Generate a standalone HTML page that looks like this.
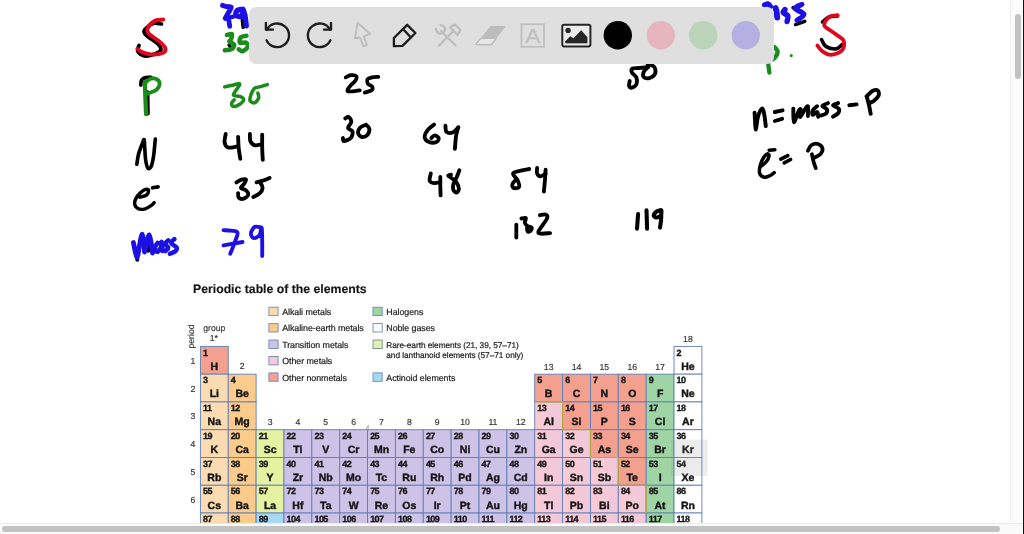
<!DOCTYPE html>
<html><head><meta charset="utf-8"><title>whiteboard</title>
<style>
html,body{margin:0;padding:0;background:#fff;overflow:hidden}
body{width:1024px;height:534px;position:relative;overflow:hidden;font-family:"Liberation Sans",sans-serif;}
#pt{position:absolute;left:0;top:0;width:1024px;height:523.2px;overflow:hidden;filter:blur(0.6px);will-change:transform;opacity:0.999}
.ak{fill:#fbdcb2} .ae{fill:#fbcb8c} .tm{fill:#cec2e7} .om{fill:url(#omg)}
.nm{fill:#f3a08e} .ha{fill:#9fd5a5} .ng{fill:#fff} .re{fill:#e5f2a2} .ac{fill:#a6daf3}
#cells rect{stroke:#5f7fb8;stroke-width:0.9}
#cells text{text-rendering:geometricPrecision;font-family:"Liberation Sans",sans-serif;}
#cells .n,#cells .s,#cells .ti{font-weight:bold;fill:#151515;stroke:#151515}
#cells .n{font-size:9.0px;letter-spacing:-0.55px;stroke-width:0.35px}
#cells .s{font-size:10.5px;text-anchor:middle;stroke-width:0.4px}
#cells .g{font-size:8.7px;fill:#333;stroke:#333;stroke-width:0.15px;text-anchor:middle}
#cells .lt{font-size:8.85px;fill:#222;stroke:#222;stroke-width:0.2px;letter-spacing:-0.05px}
#cells .sm{font-size:8.3px}
#cells .sw{stroke:#6f86bd;stroke-width:0.9}
#cells .ti{font-size:12.25px;stroke-width:0.15px}
#tb{position:absolute;left:248.8px;top:7px;width:524.8px;height:56.5px;border-radius:7px;background:#dfdfdf;}
#hs{position:absolute;left:0;top:523.2px;width:1024px;height:10.8px;background:#fafafa;border-top:1px solid #ececec;box-sizing:border-box}
#hs div{position:absolute;left:2px;top:2px;width:998px;height:6.1px;border-radius:3px;background:#c2c2c2}
#vs{position:absolute;left:1010px;top:0;width:14px;height:523px;background:#fcfcfc;border-left:1px solid #efefef;box-sizing:border-box}
#vs div{position:absolute;left:3.6px;top:14px;width:6px;height:65px;border-radius:3px;background:#c2c2c2}
#edge{position:absolute;left:1022.6px;top:0;width:1.4px;height:534px;background:#111}
svg{position:absolute;left:0;top:0}
#icons{opacity:0.999;will-change:transform;filter:blur(0.35px)}
#ink{filter:blur(0.3px)}
</style></head><body>
<svg id="ink" width="1024" height="534" viewBox="0 0 1024 534" fill="none" stroke-linecap="round" stroke-linejoin="round">
<path d="M161.5 24.0C160.1 23.9 156.0 22.4 153.1 23.5C150.2 24.6 145.0 28.7 144.1 30.8C143.2 33.0 145.2 34.2 147.5 36.4C149.8 38.5 155.3 41.6 157.6 43.7C159.8 45.9 161.2 47.7 161.0 49.3C160.8 50.9 159.1 52.2 156.5 53.3C153.9 54.4 148.3 56.4 145.2 56.1C142.1 55.8 138.9 53.4 137.9 51.6C136.9 49.8 138.8 46.4 139.0 45.4" stroke="#000" stroke-width="3.73"/>
<path d="M163.2 19.6C161.7 19.9 156.8 19.7 154.2 21.2C151.6 22.7 148.3 26.3 147.5 28.5C146.7 30.7 147.3 32.1 149.2 34.2C151.1 36.3 156.0 38.6 158.7 40.9C161.4 43.2 164.8 46.1 165.4 48.2C166.0 50.3 164.5 52.3 162.1 53.3C159.7 54.3 154.2 54.6 150.8 54.4C147.4 54.2 144.1 53.0 141.9 52.1C139.7 51.2 138.2 49.3 137.4 48.8" stroke="#e1061c" stroke-width="3.95"/>
<path d="M140.8 85.0C140.9 84.2 140.8 81.2 141.6 80.0C142.4 78.8 143.9 78.0 145.5 77.6C147.1 77.2 150.1 77.4 151.0 77.4" stroke="#000" stroke-width="3.73"/>
<path d="M147.6 92.0L147.9 113.6" stroke="#000" stroke-width="3.73"/>
<path d="M144.9 82.0C145.0 84.2 145.1 89.6 145.3 95.0C145.5 100.4 146.0 111.0 146.1 114.2" stroke="#1b8c1b" stroke-width="4.29"/>
<path d="M145.0 83.0C146.0 82.3 148.8 79.2 150.8 78.6C152.8 78.0 155.7 78.6 157.2 79.5C158.7 80.4 159.7 82.3 159.6 84.0C159.5 85.7 158.5 88.1 156.5 89.7C154.5 91.3 149.2 92.9 147.8 93.6" stroke="#1b8c1b" stroke-width="3.84"/>
<path d="M242.4 20.0L243.2 27.3" stroke="#000" stroke-width="3.62"/>
<path d="M228.5 20.0L229.3 25.3" stroke="#000" stroke-width="3.62"/>
<path d="M222.6 5.4C223.3 5.6 225.6 6.3 227.0 6.6C228.4 6.9 230.9 6.2 231.2 7.2C231.4 8.2 229.5 10.7 228.5 12.5C227.5 14.3 225.9 17.2 225.4 18.2" stroke="#1d10e4" stroke-width="4.97"/>
<path d="M225.4 18.4L233.5 16.6" stroke="#1d10e4" stroke-width="4.52"/>
<path d="M228.6 19.0L229.8 26.4" stroke="#1d10e4" stroke-width="4.75"/>
<path d="M241.5 9.4C240.8 9.6 237.9 9.7 237.0 10.6C236.1 11.5 235.4 14.0 236.0 15.0C236.6 16.0 239.1 16.9 240.3 16.5C241.5 16.1 242.9 13.6 243.3 12.4C243.8 11.2 242.8 9.0 243.0 9.4C243.2 9.8 244.4 13.2 244.8 15.0C245.2 16.8 245.4 18.4 245.6 20.2C245.8 22.0 246.1 24.9 246.2 25.8" stroke="#1d10e4" stroke-width="5.42"/>
<path d="M229.0 45.0L231.0 47.5" stroke="#000" stroke-width="3.39"/>
<path d="M226.9 34.9C227.7 34.8 231.2 33.4 231.9 34.1C232.6 34.9 231.4 38.1 231.0 39.4C230.6 40.6 229.0 40.7 229.5 41.6C230.0 42.5 233.9 43.5 234.2 44.8C234.5 46.1 232.9 48.4 231.3 49.3C229.7 50.2 225.9 50.1 224.8 50.2" stroke="#1b8c1b" stroke-width="4.52"/>
<path d="M246.5 35.8C245.6 36.0 242.0 36.1 240.9 37.2C239.8 38.3 239.0 41.7 239.8 42.6C240.7 43.5 244.7 41.9 246.0 42.6C247.3 43.4 248.2 45.7 247.6 47.1C247.0 48.5 244.1 50.8 242.6 51.2C241.1 51.6 239.3 49.6 238.7 49.3" stroke="#1b8c1b" stroke-width="4.52"/>
<path d="M224.6 86.9C225.9 86.6 230.0 85.7 232.5 85.2C235.0 84.7 239.3 83.0 239.8 84.0C240.3 85.0 236.3 89.4 235.3 91.3C234.3 93.2 232.8 94.4 233.6 95.3C234.3 96.2 238.1 95.7 239.8 96.4C241.5 97.1 243.7 98.3 243.7 99.6C243.7 100.9 241.6 103.1 239.8 104.3C238.0 105.5 234.3 106.7 233.0 106.5C231.7 106.3 231.5 104.2 231.7 103.1C231.9 102.0 233.8 100.3 234.2 99.8" stroke="#1b8c1b" stroke-width="3.50"/>
<path d="M267.3 84.6C266.0 85.0 261.6 86.2 259.4 86.9C257.2 87.6 255.6 87.2 254.2 88.5C252.8 89.8 251.7 92.7 251.0 94.7C250.3 96.7 249.4 99.2 250.0 100.6C250.6 101.9 253.2 103.2 254.6 102.8C256.0 102.4 258.1 99.6 258.6 98.0C259.2 96.4 258.0 93.8 257.9 93.0" stroke="#1b8c1b" stroke-width="3.50"/>
<path d="M136.8 164.3C137.1 162.6 137.7 157.5 138.5 154.2C139.3 150.9 141.0 147.1 141.9 144.7C142.8 142.3 143.6 139.1 144.1 139.6C144.6 140.1 144.4 143.9 144.7 147.5C145.0 151.1 145.2 157.5 145.8 161.0C146.4 164.5 147.1 167.5 148.0 168.3C148.9 169.1 150.5 168.2 151.4 166.0C152.3 163.8 153.0 159.8 153.7 155.3C154.3 150.8 155.0 141.7 155.3 139.0" stroke="#000" stroke-width="3.62"/>
<path d="M225.7 134.0C225.5 135.4 224.2 140.2 224.6 142.5C225.0 144.8 225.9 146.8 228.0 147.5C230.1 148.2 235.5 146.6 237.0 146.4" stroke="#000" stroke-width="3.84"/>
<path d="M238.1 136.9C238.2 138.8 238.3 144.4 238.7 148.1C239.1 151.8 240.0 157.0 240.3 158.8" stroke="#000" stroke-width="3.84"/>
<path d="M249.9 134.0C250.0 135.2 249.6 139.4 250.4 141.3C251.2 143.2 253.0 144.8 254.9 145.3C256.8 145.8 260.6 144.4 261.7 144.2" stroke="#000" stroke-width="3.84"/>
<path d="M262.2 134.6C262.2 136.8 262.1 143.9 262.2 148.1C262.3 152.3 262.7 157.9 262.8 159.9" stroke="#000" stroke-width="3.84"/>
<path d="M139.8 197.2C140.9 196.8 145.1 196.1 146.6 195.0C148.1 193.9 148.6 191.6 148.6 190.6C148.6 189.6 147.5 189.2 146.6 189.2C145.7 189.2 144.5 189.5 143.0 190.6C141.5 191.7 138.8 193.8 137.4 196.0C136.0 198.2 134.4 201.6 134.6 203.7C134.8 205.8 136.7 208.0 138.5 208.8C140.3 209.7 143.0 209.4 145.2 208.8C147.3 208.2 149.9 206.4 151.4 205.4C152.9 204.4 153.7 203.1 154.2 202.6" stroke="#000" stroke-width="3.45"/>
<path d="M152.5 187.8L158.1 186.9" stroke="#000" stroke-width="3.62"/>
<path d="M236.4 182.4C237.2 181.9 239.9 180.1 241.5 179.6C243.1 179.1 245.5 178.9 246.0 179.6C246.5 180.2 245.2 182.1 244.3 183.5C243.5 184.9 240.6 186.9 240.9 188.0C241.2 189.1 244.8 189.2 246.0 190.3C247.2 191.4 248.6 193.4 248.2 194.8C247.8 196.2 245.3 198.2 243.7 198.7C242.1 199.2 239.6 198.5 238.7 197.6C237.8 196.7 238.2 193.8 238.1 193.1" stroke="#000" stroke-width="3.84"/>
<path d="M269.6 177.9C268.5 178.4 265.0 179.9 262.8 180.7C260.6 181.4 257.6 182.1 256.6 182.4" stroke="#000" stroke-width="3.84"/>
<path d="M260.2 182.6C260.6 183.5 262.7 186.0 262.6 187.8C262.5 189.6 261.2 191.9 259.6 193.4C258.1 194.9 254.4 196.4 253.3 197.0" stroke="#000" stroke-width="3.84"/>
<path d="M136.5 250.0L137.3 259.8" stroke="#000" stroke-width="3.95"/>
<path d="M148.0 243.0L148.2 251.0" stroke="#000" stroke-width="3.62"/>
<path d="M133.4 242.5C134.0 244.9 135.8 256.7 136.8 257.2C137.8 257.7 138.8 249.1 139.6 245.3C140.4 241.5 141.2 234.5 141.9 234.3C142.7 234.1 143.6 241.2 144.1 244.2C144.6 247.1 144.2 252.2 144.7 252.0C145.2 251.8 146.2 245.8 146.9 243.0C147.7 240.2 148.4 234.7 149.2 234.9C149.9 235.1 150.8 241.2 151.4 244.2C152.0 247.2 152.3 251.5 152.5 253.0" stroke="#1d10e4" stroke-width="4.86"/>
<path d="M157.6 243.0C157.1 243.8 154.9 246.1 154.8 247.6C154.7 249.1 156.0 252.0 157.0 252.0C158.0 252.0 160.2 249.3 161.0 247.6C161.8 245.9 161.2 241.4 161.5 242.0C161.8 242.6 162.4 249.5 162.6 251.0" stroke="#1d10e4" stroke-width="4.63"/>
<path d="M168.3 240.3C167.7 240.9 164.9 242.5 164.9 243.7C164.9 244.9 168.2 246.4 168.3 247.6C168.4 248.8 165.9 250.4 165.4 251.0" stroke="#1d10e4" stroke-width="4.52"/>
<path d="M174.4 239.2C173.8 239.8 170.7 241.6 171.1 243.0C171.5 244.4 176.0 246.2 176.7 247.6C177.3 249.0 176.1 250.5 175.0 251.5C173.9 252.5 170.8 253.4 169.9 253.8" stroke="#1d10e4" stroke-width="4.52"/>
<path d="M223.5 230.2C224.7 230.3 228.5 230.3 230.8 230.7C233.1 231.1 236.8 230.7 237.5 232.4C238.2 234.1 236.5 237.2 235.3 240.8C234.1 244.4 231.0 251.6 230.2 253.8" stroke="#1d10e4" stroke-width="3.84"/>
<path d="M223.5 245.3L242.6 242.0" stroke="#1d10e4" stroke-width="3.84"/>
<path d="M261.1 227.4C260.1 227.3 256.6 225.9 254.9 226.8C253.2 227.7 251.3 231.1 251.0 233.0C250.7 234.9 251.9 237.6 253.3 238.0C254.7 238.4 258.0 236.9 259.4 235.2C260.8 233.5 261.2 226.6 261.7 227.9C262.2 229.2 262.1 238.4 262.2 243.1C262.3 247.8 262.2 253.8 262.2 256.0" stroke="#1d10e4" stroke-width="3.84"/>
<path d="M345.7 77.4C346.6 77.0 349.0 75.4 350.8 75.2C352.6 75.0 355.6 75.4 356.4 76.3C357.1 77.2 356.2 79.3 355.3 80.8C354.4 82.3 352.1 83.7 350.8 85.3C349.5 86.9 347.6 89.3 347.4 90.3C347.2 91.3 347.6 91.5 349.7 91.5C351.8 91.5 358.1 90.5 359.8 90.3" stroke="#000" stroke-width="3.73"/>
<path d="M378.3 76.9C377.3 77.0 373.9 77.0 372.1 77.4C370.3 77.8 368.3 78.0 367.6 79.1C366.9 80.2 367.2 82.8 368.0 84.0C368.8 85.2 371.5 85.4 372.1 86.4C372.7 87.5 372.8 89.3 371.6 90.3C370.4 91.3 365.9 92.2 364.8 92.6" stroke="#000" stroke-width="3.73"/>
<path d="M345.2 118.5C345.8 118.2 347.5 116.2 348.5 116.8C349.5 117.4 351.4 120.0 351.3 121.9C351.2 123.8 347.8 126.4 348.0 128.0C348.2 129.6 352.0 129.7 352.5 131.4C353.0 133.1 352.2 136.5 350.8 138.1C349.4 139.7 345.3 141.0 344.0 141.0C342.7 141.0 343.1 138.6 342.9 138.1" stroke="#000" stroke-width="3.84"/>
<path d="M366.0 124.7C365.1 125.2 361.6 126.1 360.3 127.5C359.0 128.9 357.8 131.5 358.1 133.1C358.4 134.7 360.4 136.7 362.0 137.0C363.6 137.3 366.4 136.2 367.6 134.8C368.8 133.4 369.6 130.3 369.3 128.6C369.0 126.9 366.6 125.3 366.0 124.7" stroke="#000" stroke-width="3.84"/>
<path d="M434.2 124.6C433.2 125.4 429.6 127.6 428.0 129.7C426.4 131.8 424.4 134.9 424.6 137.0C424.8 139.1 427.1 141.2 429.1 142.0C431.1 142.8 434.8 142.7 436.4 142.0C438.0 141.3 439.0 139.2 438.7 138.1C438.4 137.0 435.9 135.3 434.7 135.3C433.5 135.3 431.9 137.6 431.3 138.1" stroke="#000" stroke-width="3.84"/>
<path d="M445.4 125.7C445.6 126.7 445.3 130.8 446.5 131.9C447.7 133.0 450.7 133.2 452.7 132.5C454.7 131.8 457.4 128.2 458.3 127.4" stroke="#000" stroke-width="3.84"/>
<path d="M458.3 127.4C457.9 128.8 456.7 132.2 456.1 135.8C455.5 139.4 455.1 146.6 454.9 148.8" stroke="#000" stroke-width="3.84"/>
<path d="M430.8 173.5C430.6 174.7 429.1 179.2 429.7 180.8C430.3 182.4 432.4 182.9 434.2 183.1C436.0 183.3 439.3 182.2 440.3 182.0" stroke="#000" stroke-width="3.84"/>
<path d="M440.3 176.9C440.3 178.5 440.2 183.4 440.3 186.5C440.4 189.6 440.6 193.9 440.6 195.4" stroke="#000" stroke-width="3.84"/>
<path d="M459.4 170.2C458.9 171.4 457.6 175.2 456.6 177.5C455.6 179.8 453.9 182.1 453.3 184.2C452.8 186.2 452.8 188.4 453.3 189.8C453.9 191.2 455.7 192.8 456.6 192.6C457.5 192.4 458.9 190.4 458.9 188.7C458.9 187.0 457.8 184.3 456.6 182.5C455.4 180.7 453.0 179.1 451.6 178.0C450.2 176.9 448.3 176.4 448.2 175.8C448.1 175.2 450.5 174.9 451.0 174.7" stroke="#000" stroke-width="3.84"/>
<path d="M529.3 169.0C527.9 169.3 523.5 169.9 520.8 170.7C518.1 171.4 513.5 171.9 513.0 173.5C512.5 175.1 516.5 177.8 517.5 180.0C518.5 182.2 519.7 185.7 519.0 187.0C518.3 188.3 514.6 188.5 513.5 188.0C512.4 187.5 512.0 185.5 512.5 184.0C513.0 182.5 515.7 180.0 516.3 179.2" stroke="#000" stroke-width="3.84"/>
<path d="M537.1 167.9C537.1 168.8 536.5 172.1 537.1 173.5C537.7 174.9 539.1 176.3 540.5 176.3C541.9 176.3 544.8 174.0 545.6 173.5" stroke="#000" stroke-width="3.84"/>
<path d="M545.6 169.6C545.5 171.3 545.3 176.0 545.0 179.7C544.7 183.3 544.1 189.5 543.9 191.5" stroke="#000" stroke-width="3.84"/>
<path d="M516.3 224.7L516.3 237.6" stroke="#000" stroke-width="3.84"/>
<path d="M521.4 218.5C522.1 218.4 525.3 217.3 525.9 218.0C526.5 218.7 524.6 221.2 524.8 222.5C525.0 223.8 525.9 225.0 527.0 225.8C528.1 226.6 530.9 226.7 531.5 227.5C532.1 228.3 531.0 230.2 530.4 230.9C529.8 231.6 528.2 232.0 527.6 231.5C527.0 231.0 527.1 228.6 527.0 228.0" stroke="#000" stroke-width="3.84"/>
<path d="M539.9 215.2C540.9 215.1 544.4 214.1 545.6 214.6C546.8 215.1 547.8 216.1 547.2 218.0C546.6 219.9 543.7 223.5 542.2 225.8C540.7 228.1 538.5 230.7 538.3 232.0C538.1 233.3 539.1 233.5 541.1 233.7C543.1 233.9 548.6 233.2 550.1 233.1" stroke="#000" stroke-width="3.84"/>
<path d="M648.2 66.9C646.7 67.1 641.8 67.7 639.2 68.0C636.6 68.3 633.7 67.8 632.5 68.5C631.3 69.2 631.2 71.0 631.9 72.5C632.5 74.0 635.6 75.5 636.4 77.5C637.1 79.5 637.1 82.6 636.4 84.3C635.6 86.0 633.1 87.3 631.9 87.6C630.7 87.9 629.5 87.1 629.1 86.0C628.7 84.9 629.6 81.8 629.7 80.9" stroke="#000" stroke-width="3.84"/>
<path d="M648.2 66.9C647.5 67.7 644.5 70.2 643.7 71.9C643.0 73.6 642.8 76.0 643.7 77.0C644.6 78.0 647.4 78.6 649.3 78.1C651.2 77.6 654.0 75.9 654.9 74.2C655.8 72.5 655.4 69.5 654.9 68.0C654.4 66.5 652.8 65.8 651.6 65.2C650.4 64.6 648.3 64.7 647.6 64.6" stroke="#000" stroke-width="3.84"/>
<path d="M638.1 214.1L637.0 228.7" stroke="#000" stroke-width="4.07"/>
<path d="M646.5 210.2L647.1 228.7" stroke="#000" stroke-width="4.07"/>
<path d="M660.6 210.2C659.9 210.5 657.2 211.0 656.1 211.9C655.0 212.8 653.6 214.9 653.8 215.8C654.0 216.7 656.0 217.7 657.2 217.5C658.4 217.3 660.4 215.9 661.1 214.7C661.8 213.5 661.3 209.6 661.3 210.4C661.3 211.2 661.3 216.8 661.1 219.7C660.9 222.6 660.2 226.3 660.0 227.6" stroke="#000" stroke-width="4.07"/>
<path d="M793.0 7.6L800.5 10.8" stroke="#000" stroke-width="3.39"/>
<path d="M795.5 24.6L804.8 21.3" stroke="#000" stroke-width="3.39"/>
<path d="M764.5 5.0C765.1 4.8 767.0 3.5 768.0 3.8C769.0 4.0 770.1 6.0 770.5 6.5" stroke="#1d10e4" stroke-width="5.20"/>
<path d="M775.6 8.0C775.8 8.7 776.3 10.4 776.6 12.0C776.9 13.6 777.1 16.6 777.2 17.5" stroke="#1d10e4" stroke-width="5.88"/>
<path d="M785.0 9.5C784.7 10.0 782.7 11.5 783.2 12.6C783.7 13.7 787.2 14.5 787.9 16.0C788.5 17.5 787.2 20.6 787.1 21.5" stroke="#1d10e4" stroke-width="5.42"/>
<path d="M801.8 4.4C800.7 5.1 794.6 6.8 795.0 8.4C795.4 10.1 803.5 12.3 803.9 14.3C804.3 16.3 798.3 19.2 797.2 20.2" stroke="#1d10e4" stroke-width="5.20"/>
<path d="M837.6 16.0C836.2 16.2 831.5 16.0 829.0 17.0C826.5 18.0 823.6 21.1 822.5 21.9" stroke="#000" stroke-width="3.62"/>
<path d="M821.6 39.6C822.3 40.7 823.4 44.9 825.8 46.4C828.2 47.9 833.3 49.2 836.0 48.9C838.7 48.6 840.9 45.4 841.9 44.7" stroke="#000" stroke-width="3.62"/>
<path d="M837.6 15.2C836.2 15.5 831.4 15.2 829.2 16.9C827.0 18.6 823.6 22.8 824.2 25.3C824.8 27.8 829.4 29.5 832.6 32.0C835.8 34.5 842.0 37.4 843.5 40.5C845.0 43.6 844.0 48.2 841.9 50.6C839.8 53.0 834.1 54.7 830.9 54.8C827.7 54.9 824.8 52.9 822.5 51.4C820.2 49.9 818.2 46.5 817.4 45.5" stroke="#e1061c" stroke-width="3.84"/>
<path d="M772.0 46.5C772.5 46.8 774.4 47.0 775.3 48.0C776.2 49.0 777.8 50.5 777.6 52.2C777.5 53.9 775.7 56.8 774.4 58.1C773.1 59.4 770.7 59.7 770.0 60.0" stroke="#1b8c1b" stroke-width="4.52"/>
<path d="M767.7 60.0L769.4 72.5" stroke="#1b8c1b" stroke-width="4.29"/>
<path d="M791.2 55.6L791.4 55.7" stroke="#1b8c1b" stroke-width="2.94"/>
<path d="M754.6 112.6C754.8 115.4 755.2 128.7 755.7 129.4C756.2 130.2 756.9 120.5 757.9 117.1C758.9 113.6 760.9 109.3 761.9 108.7C762.9 108.1 763.5 110.8 764.1 113.7C764.8 116.6 765.5 124.0 765.8 126.1" stroke="#000" stroke-width="3.90"/>
<path d="M774.8 112.0L782.6 110.3" stroke="#000" stroke-width="3.90"/>
<path d="M774.8 121.0L782.1 118.8" stroke="#000" stroke-width="3.90"/>
<path d="M793.3 108.7C793.4 110.9 793.0 121.6 793.9 122.1C794.8 122.6 797.3 113.7 798.4 111.5C799.5 109.3 800.3 108.3 800.6 109.2C800.9 110.1 799.4 117.1 800.1 117.1C800.9 117.1 803.8 111.0 805.1 109.2C806.4 107.4 807.4 105.3 807.9 106.4C808.4 107.5 807.9 114.4 807.9 116.0" stroke="#000" stroke-width="3.90"/>
<path d="M817.1 106.2C816.4 106.9 813.3 109.1 812.6 110.6C811.9 112.0 812.0 114.7 812.8 114.9C813.6 115.1 816.4 111.7 817.3 112.0C818.2 112.3 818.1 116.0 818.2 116.8" stroke="#000" stroke-width="3.90"/>
<path d="M828.0 103.1C827.1 103.6 822.6 104.9 822.4 105.9C822.2 106.9 826.3 108.0 826.9 109.3C827.5 110.6 826.7 112.8 825.7 113.8C824.8 114.8 822.0 115.1 821.2 115.4" stroke="#000" stroke-width="3.90"/>
<path d="M838.1 103.1C837.2 103.5 832.9 104.4 833.0 105.3C833.1 106.2 837.9 107.4 838.7 108.7C839.6 110.0 839.1 111.9 838.1 113.2C837.1 114.5 833.9 116.0 833.0 116.6" stroke="#000" stroke-width="3.90"/>
<path d="M849.3 105.3L856.6 104.4" stroke="#000" stroke-width="3.90"/>
<path d="M866.7 96.3C867.1 97.8 868.3 102.4 869.0 105.3C869.7 108.2 870.4 112.4 870.7 113.8" stroke="#000" stroke-width="3.90"/>
<path d="M866.7 96.3C867.7 95.4 871.0 91.6 872.9 90.7C874.8 89.8 877.1 89.9 878.0 90.7C878.9 91.5 879.2 94.1 878.5 95.8C877.8 97.5 875.5 99.6 874.0 100.8C872.5 102.0 870.3 102.7 869.6 103.1" stroke="#000" stroke-width="3.90"/>
<path d="M760.5 166.5C761.5 165.7 765.1 163.2 766.5 161.5C767.9 159.8 768.8 157.5 769.0 156.2C769.2 154.9 768.4 153.7 767.6 153.8C766.8 153.9 765.2 155.2 764.0 157.0C762.8 158.8 761.1 162.1 760.4 164.8C759.7 167.5 759.0 171.2 759.6 173.3C760.2 175.4 762.3 176.8 764.1 177.2C765.9 177.6 768.6 176.2 770.3 175.5C772.0 174.8 773.6 173.2 774.2 172.7" stroke="#000" stroke-width="3.50"/>
<path d="M769.2 150.2L774.8 149.7" stroke="#000" stroke-width="3.62"/>
<path d="M780.8 159.2L787.8 155.6" stroke="#000" stroke-width="3.62"/>
<path d="M784.2 162.9L790.6 159.5" stroke="#000" stroke-width="3.62"/>
<path d="M807.9 150.8C808.5 149.9 809.6 146.3 811.3 145.2C813.0 144.1 816.1 143.4 818.0 144.0C819.9 144.6 822.1 146.8 822.5 148.5C822.9 150.2 821.8 152.6 820.3 154.2C818.8 155.8 814.6 157.4 813.5 158.1" stroke="#000" stroke-width="3.73"/>
<path d="M811.9 154.2C812.2 155.4 812.9 159.2 813.5 161.5C814.1 163.8 815.4 167.1 815.8 168.2" stroke="#000" stroke-width="3.73"/>
</svg>
<div id="pt">
<svg id="cells" width="1024" height="534" viewBox="0 0 1024 534">
<defs><linearGradient id="omg" x1="0" x2="1" y1="0" y2="0"><stop offset="0" stop-color="#fbcad2"/><stop offset="1" stop-color="#efc8dc"/></linearGradient></defs>
<text class="ti" x="193" y="293.2">Periodic table of the elements</text>
<rect class="sw ak" x="268.90" y="307.20" width="9.2" height="8.4"/><text class="lt" x="282.20" y="314.90">Alkali metals</text>
<rect class="sw ae" x="268.90" y="323.62" width="9.2" height="8.4"/><text class="lt" x="282.20" y="331.32">Alkaline-earth metals</text>
<rect class="sw tm" x="268.90" y="340.04" width="9.2" height="8.4"/><text class="lt" x="282.20" y="347.74">Transition metals</text>
<rect class="sw om" x="268.90" y="356.46" width="9.2" height="8.4"/><text class="lt" x="282.20" y="364.16">Other metals</text>
<rect class="sw nm" x="268.90" y="372.88" width="9.2" height="8.4"/><text class="lt" x="282.20" y="380.58">Other nonmetals</text>
<rect class="sw ha" x="373.00" y="307.20" width="9.2" height="8.4"/><text class="lt" x="386.30" y="314.90">Halogens</text>
<rect class="sw ng" x="373.00" y="323.62" width="9.2" height="8.4"/><text class="lt" x="386.30" y="331.32">Noble gases</text>
<rect class="sw re" x="373.00" y="340.04" width="9.2" height="8.4"/><text class="lt sm" x="386.30" y="347.74">Rare-earth elements (21, 39, 57–71)</text>
<rect class="sw ac" x="373.00" y="372.88" width="9.2" height="8.4"/><text class="lt" x="386.30" y="380.58">Actinoid elements</text>
<text class="lt sm" x="386.30" y="358.34">and lanthanoid elements (57–71 only)</text>
<text class="g" x="270.05" y="425.35">3</text>
<text class="g" x="297.91" y="425.35">4</text>
<text class="g" x="325.77" y="425.35">5</text>
<text class="g" x="353.63" y="425.35">6</text>
<text class="g" x="381.49" y="425.35">7</text>
<text class="g" x="409.35" y="425.35">8</text>
<text class="g" x="437.21" y="425.35">9</text>
<text class="g" x="465.07" y="425.35">10</text>
<text class="g" x="492.93" y="425.35">11</text>
<text class="g" x="520.79" y="425.35">12</text>
<text class="g" x="548.65" y="369.65">13</text>
<text class="g" x="576.51" y="369.65">14</text>
<text class="g" x="604.37" y="369.65">15</text>
<text class="g" x="632.23" y="369.65">16</text>
<text class="g" x="660.09" y="369.65">17</text>
<text class="g" x="687.95" y="342.05">18</text>
<text class="g" x="242.19" y="369.25">2</text>
<text class="g" x="213.83" y="341.05">1*</text>
<text class="g" x="214.33" y="331.35">group</text>
<text class="g" x="193.00" y="363.83">1</text>
<text class="g" x="193.00" y="391.60">2</text>
<text class="g" x="193.00" y="419.38">3</text>
<text class="g" x="193.00" y="447.14">4</text>
<text class="g" x="193.00" y="474.92">5</text>
<text class="g" x="193.00" y="502.69">6</text>
<text class="g" transform="translate(194.4 336.5) rotate(-90)">period</text>
<rect class="nm" x="200.40" y="346.40" width="27.86" height="27.77"/><text class="n" x="203.00" y="355.50">1</text><text class="s" x="214.33" y="369.70">H</text>
<rect class="ng" x="674.02" y="346.40" width="27.86" height="27.77"/><text class="n" x="676.62" y="355.50">2</text><text class="s" x="687.95" y="369.70">He</text>
<rect class="ak" x="200.40" y="374.17" width="27.86" height="27.77"/><text class="n" x="203.00" y="383.27">3</text><text class="s" x="214.33" y="397.47">Li</text>
<rect class="ae" x="228.26" y="374.17" width="27.86" height="27.77"/><text class="n" x="230.86" y="383.27">4</text><text class="s" x="242.19" y="397.47">Be</text>
<rect class="nm" x="534.72" y="374.17" width="27.86" height="27.77"/><text class="n" x="537.32" y="383.27">5</text><text class="s" x="548.65" y="397.47">B</text>
<rect class="nm" x="562.58" y="374.17" width="27.86" height="27.77"/><text class="n" x="565.18" y="383.27">6</text><text class="s" x="576.51" y="397.47">C</text>
<rect class="nm" x="590.44" y="374.17" width="27.86" height="27.77"/><text class="n" x="593.04" y="383.27">7</text><text class="s" x="604.37" y="397.47">N</text>
<rect class="nm" x="618.30" y="374.17" width="27.86" height="27.77"/><text class="n" x="620.90" y="383.27">8</text><text class="s" x="632.23" y="397.47">O</text>
<rect class="ha" x="646.16" y="374.17" width="27.86" height="27.77"/><text class="n" x="648.76" y="383.27">9</text><text class="s" x="660.09" y="397.47">F</text>
<rect class="ng" x="674.02" y="374.17" width="27.86" height="27.77"/><text class="n" x="676.62" y="383.27">10</text><text class="s" x="687.95" y="397.47">Ne</text>
<rect class="ak" x="200.40" y="401.94" width="27.86" height="27.77"/><text class="n" x="203.00" y="411.04">11</text><text class="s" x="214.33" y="425.24">Na</text>
<rect class="ae" x="228.26" y="401.94" width="27.86" height="27.77"/><text class="n" x="230.86" y="411.04">12</text><text class="s" x="242.19" y="425.24">Mg</text>
<rect class="om" x="534.72" y="401.94" width="27.86" height="27.77"/><text class="n" x="537.32" y="411.04">13</text><text class="s" x="548.65" y="425.24">Al</text>
<rect class="nm" x="562.58" y="401.94" width="27.86" height="27.77"/><text class="n" x="565.18" y="411.04">14</text><text class="s" x="576.51" y="425.24">Si</text>
<rect class="nm" x="590.44" y="401.94" width="27.86" height="27.77"/><text class="n" x="593.04" y="411.04">15</text><text class="s" x="604.37" y="425.24">P</text>
<rect class="nm" x="618.30" y="401.94" width="27.86" height="27.77"/><text class="n" x="620.90" y="411.04">16</text><text class="s" x="632.23" y="425.24">S</text>
<rect class="ha" x="646.16" y="401.94" width="27.86" height="27.77"/><text class="n" x="648.76" y="411.04">17</text><text class="s" x="660.09" y="425.24">Cl</text>
<rect class="ng" x="674.02" y="401.94" width="27.86" height="27.77"/><text class="n" x="676.62" y="411.04">18</text><text class="s" x="687.95" y="425.24">Ar</text>
<rect class="ak" x="200.40" y="429.71" width="27.86" height="27.77"/><text class="n" x="203.00" y="438.81">19</text><text class="s" x="214.33" y="453.01">K</text>
<rect class="ae" x="228.26" y="429.71" width="27.86" height="27.77"/><text class="n" x="230.86" y="438.81">20</text><text class="s" x="242.19" y="453.01">Ca</text>
<rect class="re" x="256.12" y="429.71" width="27.86" height="27.77"/><text class="n" x="258.72" y="438.81">21</text><text class="s" x="270.05" y="453.01">Sc</text>
<rect class="tm" x="283.98" y="429.71" width="27.86" height="27.77"/><text class="n" x="286.58" y="438.81">22</text><text class="s" x="297.91" y="453.01">Ti</text>
<rect class="tm" x="311.84" y="429.71" width="27.86" height="27.77"/><text class="n" x="314.44" y="438.81">23</text><text class="s" x="325.77" y="453.01">V</text>
<rect class="tm" x="339.70" y="429.71" width="27.86" height="27.77"/><text class="n" x="342.30" y="438.81">24</text><text class="s" x="353.63" y="453.01">Cr</text>
<rect class="tm" x="367.56" y="429.71" width="27.86" height="27.77"/><text class="n" x="370.16" y="438.81">25</text><text class="s" x="381.49" y="453.01">Mn</text>
<rect class="tm" x="395.42" y="429.71" width="27.86" height="27.77"/><text class="n" x="398.02" y="438.81">26</text><text class="s" x="409.35" y="453.01">Fe</text>
<rect class="tm" x="423.28" y="429.71" width="27.86" height="27.77"/><text class="n" x="425.88" y="438.81">27</text><text class="s" x="437.21" y="453.01">Co</text>
<rect class="tm" x="451.14" y="429.71" width="27.86" height="27.77"/><text class="n" x="453.74" y="438.81">28</text><text class="s" x="465.07" y="453.01">Ni</text>
<rect class="tm" x="479.00" y="429.71" width="27.86" height="27.77"/><text class="n" x="481.60" y="438.81">29</text><text class="s" x="492.93" y="453.01">Cu</text>
<rect class="tm" x="506.86" y="429.71" width="27.86" height="27.77"/><text class="n" x="509.46" y="438.81">30</text><text class="s" x="520.79" y="453.01">Zn</text>
<rect class="om" x="534.72" y="429.71" width="27.86" height="27.77"/><text class="n" x="537.32" y="438.81">31</text><text class="s" x="548.65" y="453.01">Ga</text>
<rect class="om" x="562.58" y="429.71" width="27.86" height="27.77"/><text class="n" x="565.18" y="438.81">32</text><text class="s" x="576.51" y="453.01">Ge</text>
<rect class="nm" x="590.44" y="429.71" width="27.86" height="27.77"/><text class="n" x="593.04" y="438.81">33</text><text class="s" x="604.37" y="453.01">As</text>
<rect class="nm" x="618.30" y="429.71" width="27.86" height="27.77"/><text class="n" x="620.90" y="438.81">34</text><text class="s" x="632.23" y="453.01">Se</text>
<rect class="ha" x="646.16" y="429.71" width="27.86" height="27.77"/><text class="n" x="648.76" y="438.81">35</text><text class="s" x="660.09" y="453.01">Br</text>
<rect class="ng" x="674.02" y="429.71" width="27.86" height="27.77"/><text class="n" x="676.62" y="438.81">36</text><text class="s" x="687.95" y="453.01">Kr</text>
<rect class="ak" x="200.40" y="457.48" width="27.86" height="27.77"/><text class="n" x="203.00" y="466.58">37</text><text class="s" x="214.33" y="480.78">Rb</text>
<rect class="ae" x="228.26" y="457.48" width="27.86" height="27.77"/><text class="n" x="230.86" y="466.58">38</text><text class="s" x="242.19" y="480.78">Sr</text>
<rect class="re" x="256.12" y="457.48" width="27.86" height="27.77"/><text class="n" x="258.72" y="466.58">39</text><text class="s" x="270.05" y="480.78">Y</text>
<rect class="tm" x="283.98" y="457.48" width="27.86" height="27.77"/><text class="n" x="286.58" y="466.58">40</text><text class="s" x="297.91" y="480.78">Zr</text>
<rect class="tm" x="311.84" y="457.48" width="27.86" height="27.77"/><text class="n" x="314.44" y="466.58">41</text><text class="s" x="325.77" y="480.78">Nb</text>
<rect class="tm" x="339.70" y="457.48" width="27.86" height="27.77"/><text class="n" x="342.30" y="466.58">42</text><text class="s" x="353.63" y="480.78">Mo</text>
<rect class="tm" x="367.56" y="457.48" width="27.86" height="27.77"/><text class="n" x="370.16" y="466.58">43</text><text class="s" x="381.49" y="480.78">Tc</text>
<rect class="tm" x="395.42" y="457.48" width="27.86" height="27.77"/><text class="n" x="398.02" y="466.58">44</text><text class="s" x="409.35" y="480.78">Ru</text>
<rect class="tm" x="423.28" y="457.48" width="27.86" height="27.77"/><text class="n" x="425.88" y="466.58">45</text><text class="s" x="437.21" y="480.78">Rh</text>
<rect class="tm" x="451.14" y="457.48" width="27.86" height="27.77"/><text class="n" x="453.74" y="466.58">46</text><text class="s" x="465.07" y="480.78">Pd</text>
<rect class="tm" x="479.00" y="457.48" width="27.86" height="27.77"/><text class="n" x="481.60" y="466.58">47</text><text class="s" x="492.93" y="480.78">Ag</text>
<rect class="tm" x="506.86" y="457.48" width="27.86" height="27.77"/><text class="n" x="509.46" y="466.58">48</text><text class="s" x="520.79" y="480.78">Cd</text>
<rect class="om" x="534.72" y="457.48" width="27.86" height="27.77"/><text class="n" x="537.32" y="466.58">49</text><text class="s" x="548.65" y="480.78">In</text>
<rect class="om" x="562.58" y="457.48" width="27.86" height="27.77"/><text class="n" x="565.18" y="466.58">50</text><text class="s" x="576.51" y="480.78">Sn</text>
<rect class="om" x="590.44" y="457.48" width="27.86" height="27.77"/><text class="n" x="593.04" y="466.58">51</text><text class="s" x="604.37" y="480.78">Sb</text>
<rect class="nm" x="618.30" y="457.48" width="27.86" height="27.77"/><text class="n" x="620.90" y="466.58">52</text><text class="s" x="632.23" y="480.78">Te</text>
<rect class="ha" x="646.16" y="457.48" width="27.86" height="27.77"/><text class="n" x="648.76" y="466.58">53</text><text class="s" x="660.09" y="480.78">I</text>
<rect class="ng" x="674.02" y="457.48" width="27.86" height="27.77"/><text class="n" x="676.62" y="466.58">54</text><text class="s" x="687.95" y="480.78">Xe</text>
<rect class="ak" x="200.40" y="485.25" width="27.86" height="27.77"/><text class="n" x="203.00" y="494.35">55</text><text class="s" x="214.33" y="508.55">Cs</text>
<rect class="ae" x="228.26" y="485.25" width="27.86" height="27.77"/><text class="n" x="230.86" y="494.35">56</text><text class="s" x="242.19" y="508.55">Ba</text>
<rect class="re" x="256.12" y="485.25" width="27.86" height="27.77"/><text class="n" x="258.72" y="494.35">57</text><text class="s" x="270.05" y="508.55">La</text>
<rect class="tm" x="283.98" y="485.25" width="27.86" height="27.77"/><text class="n" x="286.58" y="494.35">72</text><text class="s" x="297.91" y="508.55">Hf</text>
<rect class="tm" x="311.84" y="485.25" width="27.86" height="27.77"/><text class="n" x="314.44" y="494.35">73</text><text class="s" x="325.77" y="508.55">Ta</text>
<rect class="tm" x="339.70" y="485.25" width="27.86" height="27.77"/><text class="n" x="342.30" y="494.35">74</text><text class="s" x="353.63" y="508.55">W</text>
<rect class="tm" x="367.56" y="485.25" width="27.86" height="27.77"/><text class="n" x="370.16" y="494.35">75</text><text class="s" x="381.49" y="508.55">Re</text>
<rect class="tm" x="395.42" y="485.25" width="27.86" height="27.77"/><text class="n" x="398.02" y="494.35">76</text><text class="s" x="409.35" y="508.55">Os</text>
<rect class="tm" x="423.28" y="485.25" width="27.86" height="27.77"/><text class="n" x="425.88" y="494.35">77</text><text class="s" x="437.21" y="508.55">Ir</text>
<rect class="tm" x="451.14" y="485.25" width="27.86" height="27.77"/><text class="n" x="453.74" y="494.35">78</text><text class="s" x="465.07" y="508.55">Pt</text>
<rect class="tm" x="479.00" y="485.25" width="27.86" height="27.77"/><text class="n" x="481.60" y="494.35">79</text><text class="s" x="492.93" y="508.55">Au</text>
<rect class="tm" x="506.86" y="485.25" width="27.86" height="27.77"/><text class="n" x="509.46" y="494.35">80</text><text class="s" x="520.79" y="508.55">Hg</text>
<rect class="om" x="534.72" y="485.25" width="27.86" height="27.77"/><text class="n" x="537.32" y="494.35">81</text><text class="s" x="548.65" y="508.55">Tl</text>
<rect class="om" x="562.58" y="485.25" width="27.86" height="27.77"/><text class="n" x="565.18" y="494.35">82</text><text class="s" x="576.51" y="508.55">Pb</text>
<rect class="om" x="590.44" y="485.25" width="27.86" height="27.77"/><text class="n" x="593.04" y="494.35">83</text><text class="s" x="604.37" y="508.55">Bi</text>
<rect class="om" x="618.30" y="485.25" width="27.86" height="27.77"/><text class="n" x="620.90" y="494.35">84</text><text class="s" x="632.23" y="508.55">Po</text>
<rect class="ha" x="646.16" y="485.25" width="27.86" height="27.77"/><text class="n" x="648.76" y="494.35">85</text><text class="s" x="660.09" y="508.55">At</text>
<rect class="ng" x="674.02" y="485.25" width="27.86" height="27.77"/><text class="n" x="676.62" y="494.35">86</text><text class="s" x="687.95" y="508.55">Rn</text>
<rect class="ak" x="200.40" y="513.02" width="27.86" height="27.77"/><text class="n" x="203.00" y="522.12">87</text><text class="s" x="214.33" y="536.32">Fr</text>
<rect class="ae" x="228.26" y="513.02" width="27.86" height="27.77"/><text class="n" x="230.86" y="522.12">88</text><text class="s" x="242.19" y="536.32">Ra</text>
<rect class="ac" x="256.12" y="513.02" width="27.86" height="27.77"/><text class="n" x="258.72" y="522.12">89</text><text class="s" x="270.05" y="536.32">Ac</text>
<rect class="tm" x="283.98" y="513.02" width="27.86" height="27.77"/><text class="n" x="286.58" y="522.12">104</text><text class="s" x="297.91" y="536.32">Rf</text>
<rect class="tm" x="311.84" y="513.02" width="27.86" height="27.77"/><text class="n" x="314.44" y="522.12">105</text><text class="s" x="325.77" y="536.32">Db</text>
<rect class="tm" x="339.70" y="513.02" width="27.86" height="27.77"/><text class="n" x="342.30" y="522.12">106</text><text class="s" x="353.63" y="536.32">Sg</text>
<rect class="tm" x="367.56" y="513.02" width="27.86" height="27.77"/><text class="n" x="370.16" y="522.12">107</text><text class="s" x="381.49" y="536.32">Bh</text>
<rect class="tm" x="395.42" y="513.02" width="27.86" height="27.77"/><text class="n" x="398.02" y="522.12">108</text><text class="s" x="409.35" y="536.32">Hs</text>
<rect class="tm" x="423.28" y="513.02" width="27.86" height="27.77"/><text class="n" x="425.88" y="522.12">109</text><text class="s" x="437.21" y="536.32">Mt</text>
<rect class="tm" x="451.14" y="513.02" width="27.86" height="27.77"/><text class="n" x="453.74" y="522.12">110</text><text class="s" x="465.07" y="536.32">Ds</text>
<rect class="tm" x="479.00" y="513.02" width="27.86" height="27.77"/><text class="n" x="481.60" y="522.12">111</text><text class="s" x="492.93" y="536.32">Rg</text>
<rect class="tm" x="506.86" y="513.02" width="27.86" height="27.77"/><text class="n" x="509.46" y="522.12">112</text><text class="s" x="520.79" y="536.32">Cn</text>
<rect class="om" x="534.72" y="513.02" width="27.86" height="27.77"/><text class="n" x="537.32" y="522.12">113</text><text class="s" x="548.65" y="536.32">Nh</text>
<rect class="om" x="562.58" y="513.02" width="27.86" height="27.77"/><text class="n" x="565.18" y="522.12">114</text><text class="s" x="576.51" y="536.32">Fl</text>
<rect class="om" x="590.44" y="513.02" width="27.86" height="27.77"/><text class="n" x="593.04" y="522.12">115</text><text class="s" x="604.37" y="536.32">Mc</text>
<rect class="om" x="618.30" y="513.02" width="27.86" height="27.77"/><text class="n" x="620.90" y="522.12">116</text><text class="s" x="632.23" y="536.32">Lv</text>
<rect class="ha" x="646.16" y="513.02" width="27.86" height="27.77"/><text class="n" x="648.76" y="522.12">117</text><text class="s" x="660.09" y="536.32">Ts</text>
<rect class="ng" x="674.02" y="513.02" width="27.86" height="27.77"/><text class="n" x="676.62" y="522.12">118</text><text class="s" x="687.95" y="536.32">Og</text>
<path fill="none" stroke="#b9a93a" stroke-width="1.1" d="M534.7 401.9H562.6V429.7H590.4V457.5H618.3V485.2H646.2V513.0"/>
<rect x="671" y="439.5" width="36.5" height="36.5" style="fill:rgba(140,140,140,0.17);stroke:none"/>
<path d="M368.3 425.4L366 429.2L367.4 429.1L368.1 430.7L368.8 430.4L368.2 428.8Z" fill="#fff" stroke="#666" stroke-width="0.5"/>
</svg>
</div>
<div id="tb"></div>
<svg id="icons" width="1024" height="534" viewBox="0 0 1024 534">
<g fill="none" stroke="#1e1e1e" stroke-width="2.35" stroke-linecap="round" stroke-linejoin="round">
<path d="M266.8 29.8A11.8 11.8 0 1 1 266.5 40.2"/>
<path d="M265.9 22.8V29.6H272.9"/>
<path d="M330.1 29.8A11.8 11.8 0 1 0 330.4 40.2"/>
<path d="M331 22.8V29.6H324"/>
<path d="M407.2 24.8L415.4 33L402.5 45.9L393.9 46.2V38Z"/>
<path d="M403.7 29.8L410.7 37.3"/>
</g>
<g fill="none" stroke="#bebebe" stroke-width="1.9" stroke-linejoin="round" stroke-linecap="round">
<path d="M357.6 22.8L354.9 38.4L359.9 37.5L363.5 46.3L367 45L363.8 36.4L370 33.8Z"/>
</g>
<g fill="none" stroke="#bdbdbd" stroke-width="2.3" stroke-linecap="round" stroke-linejoin="round">
<path d="M439 45.5L454 30.5"/>
<path d="M455.5 45.5L441 31"/>
<path d="M436 29C436.5 33.5 441 35 444 32C446.5 29 444.5 25.5 440.5 24.8"/>
<path d="M450 27.5L455 24.5L460.5 30L457.5 35Z"/>
</g>
<path d="M490.3 25.9H505.9L496.3 38.4H480.9Z" fill="#bcbcbc"/>
<path d="M480.9 38.4H496.3L491.4 44.7H477.2Q475.6 44.4 476.6 43Z" fill="#e6e6e6" stroke="#bcbcbc" stroke-width="1.4" stroke-linejoin="round"/>
<rect x="521.4" y="24.2" width="22.6" height="22.6" fill="none" stroke="#c1c1c1" stroke-width="1.9"/>
<text transform="translate(532.8 42.6) scale(1.12 1)" text-anchor="middle" style='font-family:"Liberation Sans",sans-serif;font-size:20.3px' fill="#c1c1c1" stroke="#c1c1c1" stroke-width="0.5">A</text>
<rect x="562.3" y="24.8" width="28.1" height="21.6" rx="1.8" fill="#ebebeb" stroke="#262626" stroke-width="2"/>
<circle cx="568.1" cy="30.4" r="2.7" fill="#262626"/>
<path d="M565.6 43.1V41.2L570.3 36.5L573.4 38.6L581.2 30.6L587.1 37.3V43.1Z" fill="#262626" stroke="#262626" stroke-width="0.6" stroke-linejoin="round"/>
<circle cx="617.8" cy="35.3" r="14.2" fill="#000"/>
<circle cx="660.8" cy="35.3" r="14.2" fill="#e6b5bd"/>
<circle cx="703.2" cy="35.3" r="14.2" fill="#b9d4b9"/>
<circle cx="745.8" cy="35.3" r="14.2" fill="#b4b0e1"/>

</svg>
<div id="hs"><div></div></div>
<div id="vs"><div></div></div>
<div id="edge"></div>
</body></html>
